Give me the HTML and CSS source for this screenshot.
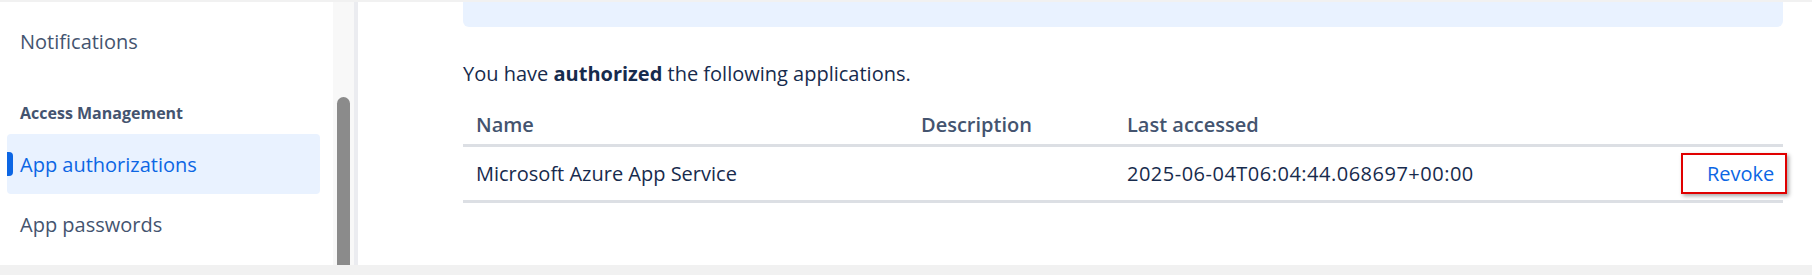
FILE: index.html
```html
<!DOCTYPE html>
<html lang="en">
<head>
    <meta charset="UTF-8">
    <meta name="viewport" content="width=device-width, initial-scale=1.0">
    <title>App authorizations</title>
    <link rel="stylesheet" href="styles.css">
</head>
<body>
    <div class="page">
        <aside class="sidebar">
            <nav class="side-nav">
                <a href="#" class="nav-item">Notifications</a>
                <div class="nav-heading">Access Management</div>
                <a href="#" class="nav-item active">App authorizations</a>
                <a href="#" class="nav-item">App passwords</a>
            </nav>
            <div class="scroll-track">
                <div class="scroll-thumb"></div>
            </div>
        </aside>

        <main class="content">
            <div class="notice"></div>

            <p class="intro">You have <strong>authorized</strong> the following applications.</p>

            <table class="apps-table">
                <colgroup>
                    <col class="col-name">
                    <col class="col-desc">
                    <col>
                    <col class="col-action">
                </colgroup>
                <thead>
                    <tr>
                        <th>Name</th>
                        <th>Description</th>
                        <th>Last accessed</th>
                        <th></th>
                    </tr>
                </thead>
                <tbody>
                    <tr>
                        <td>Microsoft Azure App Service</td>
                        <td></td>
                        <td class="date-cell">2025-06-04T06:04:44.068697+00:00</td>
                        <td class="action-cell"><button class="revoke-button">Revoke</button></td>
                    </tr>
                </tbody>
            </table>
        </main>
    </div>
</body>
</html>
```

FILE: styles.css
```css
body {
    margin: 0;
    padding-top: 2px;
    font-family: 'Open Sans', 'Noto Sans', sans-serif;
    font-size: 20px;
    background-color: #f1f1f1;
    color: #172b4d;
}

.page {
    display: flex;
    height: 263px;
}

.sidebar {
    display: flex;
    width: 354px;
    background-color: #fff;
    border-right: 4px solid #ebecf0;
    overflow: hidden;
}

.side-nav {
    width: 313px;
    padding: 9px 13px 0 7px;
}

.nav-item {
    position: relative;
    display: flex;
    align-items: center;
    height: 60px;
    padding-left: 13px;
    border-radius: 4px;
    color: #44546f;
    text-decoration: none;
}

.nav-item.active {
    background-color: #e9f2ff;
    color: #0c66e4;
}

.nav-item.active::before {
    content: '';
    position: absolute;
    left: 0;
    top: 18px;
    width: 6px;
    height: 24px;
    background-color: #0c66e4;
    border-radius: 0 4px 4px 0;
}

.nav-heading {
    padding: 30px 0 9px 13px;
    line-height: 24px;
    font-size: 16px;
    font-weight: 700;
    color: #44546f;
}

.scroll-track {
    width: 21px;
    background-color: #f8f8f8;
    display: flex;
    flex-direction: column;
    align-items: center;
    padding-top: 95px;
}

.scroll-thumb {
    flex: 1;
    width: 13px;
    background-color: #8b8b8b;
    border-radius: 7px 7px 0 0;
}

.content {
    flex: 1;
    background-color: #fff;
    padding: 0 29px 0 105px;
}

.notice {
    height: 25px;
    background-color: #e9f2ff;
    border-radius: 0 0 6px 6px;
}

.intro {
    margin: 33px 0 0;
    line-height: 28px;
}

.apps-table {
    width: 100%;
    margin-top: 13px;
    border-collapse: collapse;
    table-layout: fixed;
}

.col-name {
    width: 445px;
}

.col-desc {
    width: 206px;
}

.col-action {
    width: 115px;
}

.apps-table th {
    padding: 10px 0 5px 13px;
    line-height: 28px;
    text-align: left;
    font-weight: 600;
    color: #44546f;
    border-bottom: 3px solid #dcdfe4;
}

.apps-table td {
    padding: 6px 0 6px 13px;
    line-height: 28px;
    border-bottom: 3px solid #dcdfe4;
}

.date-cell {
    letter-spacing: 0.5px;
}

.action-cell {
    text-align: right;
}

.revoke-button {
    height: 41px;
    padding: 0 11px 0 24px;
    font-family: inherit;
    font-size: 20px;
    color: #0c66e4;
    background-color: #fff;
    border: 2px solid #e00000;
    box-shadow: 2px 2px 4px rgba(0, 0, 0, 0.35);
    cursor: pointer;
}
```
